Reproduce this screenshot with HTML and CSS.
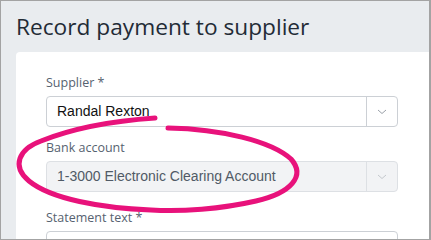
FILE: index.html
```html
<!DOCTYPE html>
<html>
<head>
<meta charset="utf-8">
<link rel="stylesheet" href="styles.css">
</head>
<body>
<div class="frame">
  <h1 class="title">Record payment to supplier</h1>
  <div class="card">
    <div class="field">
      <div class="label">Supplier *</div>
      <div class="select">
        <div class="value">Randal Rexton</div>
        <div class="btn"><svg width="10" height="6" viewBox="0 0 10 6"><path d="M1 1 L5 4.5 L9 1" fill="none" stroke="#9aa0a8" stroke-width="1"/></svg></div>
      </div>
    </div>
    <div class="field field-bank">
      <div class="label">Bank account</div>
      <div class="select disabled">
        <div class="value">1-3000 Electronic Clearing Account</div>
        <div class="btn"><svg width="10" height="6" viewBox="0 0 10 6"><path d="M1 1 L5 4.5 L9 1" fill="none" stroke="#c4c8cd" stroke-width="1"/></svg></div>
      </div>
    </div>
    <div class="field">
      <div class="label">Statement text *</div>
      <div class="select"><div class="value"></div></div>
    </div>
  </div>
  <svg class="circle" width="431" height="240" viewBox="0 0 431 240">
    <path d="M167,127 C220,128 270,140 290,158 C305,175 290,192 255,200 C220,208 180,211 150,209 C100,207 50,198 28,180 C10,165 18,148 40,140 C70,128 110,120 154,117" fill="none" stroke="#e8127b" stroke-width="5" stroke-linecap="round"/>
  </svg>
</div>
</body>
</html>
```
FILE: styles.css
```css
html, body { margin: 0; padding: 0; }
.frame {
  position: relative;
  width: 431px;
  height: 240px;
  box-sizing: border-box;
  border: 1px solid #a3a3a3;
  border-right-width: 2px;
  background: #e9ecef;
  overflow: hidden;
  font-family: "Open Sans", sans-serif;
}
.title {
  margin: 0;
  padding: 12px 0 0 15px;
  height: 39px;
  font-size: 22.7px;
  font-weight: 400;
  line-height: 28px;
  color: #232b36;
}
.card {
  margin-left: 15px;
  background: #fff;
  border-radius: 4px 0 0 0;
  padding: 22px 0 0 30px;
  height: 300px;
}
.field { margin-bottom: 12px; }
.field-bank { margin-bottom: 17px; }
.label {
  font-size: 12.5px;
  line-height: 18px;
  color: #566270;
  margin-bottom: 4px;
}
.select {
  width: 352px;
  height: 31px;
  box-sizing: border-box;
  border: 1px solid #ccd0d5;
  border-radius: 4px;
  display: flex;
  background: #fff;
}
.select.disabled { background: #f2f3f5; border-color: #dde0e4; }
.value {
  flex: 1;
  padding-left: 10px;
  font-family: "Liberation Sans", Arial, sans-serif;
  font-size: 14px;
  line-height: 29px;
  color: #111;
}
.disabled .value { color: #505a66; }
.btn {
  width: 30px;
  border-left: 1px solid #ccd0d5;
  display: flex;
  align-items: center;
  justify-content: center;
}
.disabled .btn { border-left-color: #dde0e4; }
.circle { position: absolute; left: 0; top: 0; pointer-events: none; }
```
